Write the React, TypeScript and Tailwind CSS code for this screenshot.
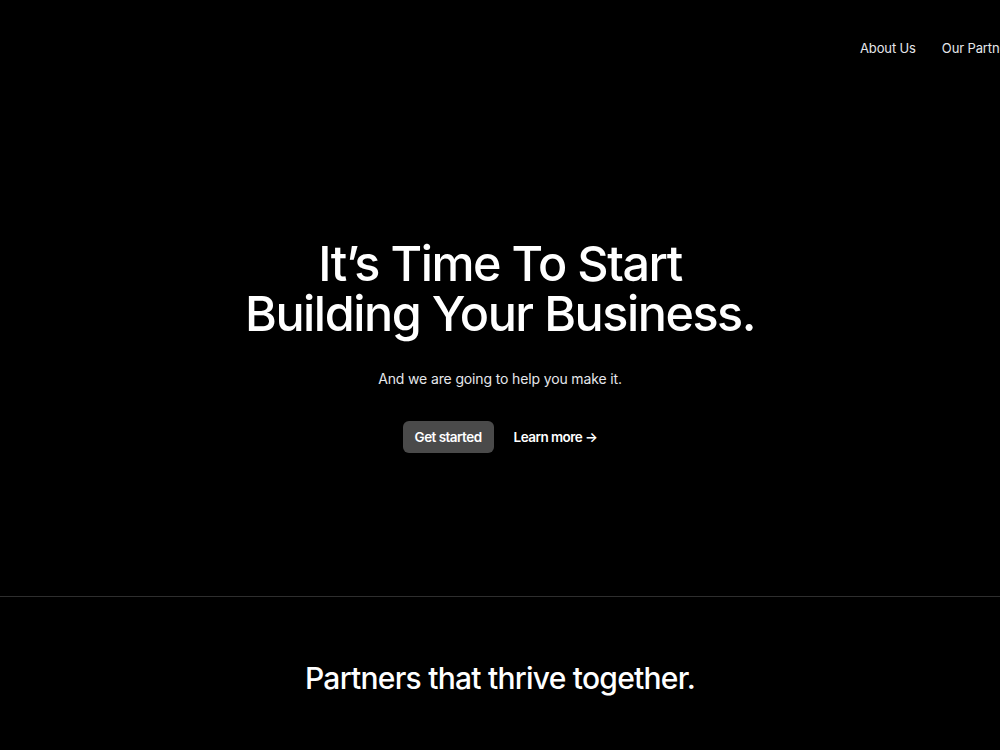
const navLinks = ["About Us", "Our Partners", "Pricing", "Contact"]

export default function App() {
  return (
    <div
      className="min-h-screen w-full overflow-hidden bg-black text-white"
      style={{ fontFamily: "Inter, 'Noto Sans', sans-serif" }}
    >
      {/* top bar */}
      <header className="flex h-[96px] items-center pl-[860px] pt-[2px]">
        <nav className="flex shrink-0 gap-[26px] whitespace-nowrap text-[13px] tracking-[-0.01em] text-gray-200">
          {navLinks.map((link) => (
            <a key={link} href="#" className="hover:text-white">
              {link}
            </a>
          ))}
        </nav>
      </header>

      {/* hero */}
      <section className="flex h-[500px] flex-col items-center pt-[143px] text-center">
        <h1 className="text-[48.5px] font-medium leading-[50px] tracking-[-0.03em]">
          It’s Time To Start
          <br />
          Building Your Business.
        </h1>
        <p className="mt-[29px] text-[14px] tracking-[-0.01em] text-gray-200">And we are going to help you make it.</p>
        <div className="mt-[32px] flex items-center gap-[20px]">
          <button className="h-[32px] rounded-md bg-[#4a4a4a] px-[12px] text-[13.5px] font-semibold tracking-[-0.04em] text-white">
            Get started
          </button>
          <a href="#" className="text-[13.5px] font-semibold tracking-[-0.04em] text-white">
            Learn more →
          </a>
        </div>
      </section>

      <div className="h-px w-full bg-[#2e2e2e]" />

      {/* partners */}
      <section className="flex flex-col items-center pt-[59px]">
        <h2 className="text-[30px] font-medium tracking-tight">Partners that thrive together.</h2>
      </section>
    </div>
  )
}
